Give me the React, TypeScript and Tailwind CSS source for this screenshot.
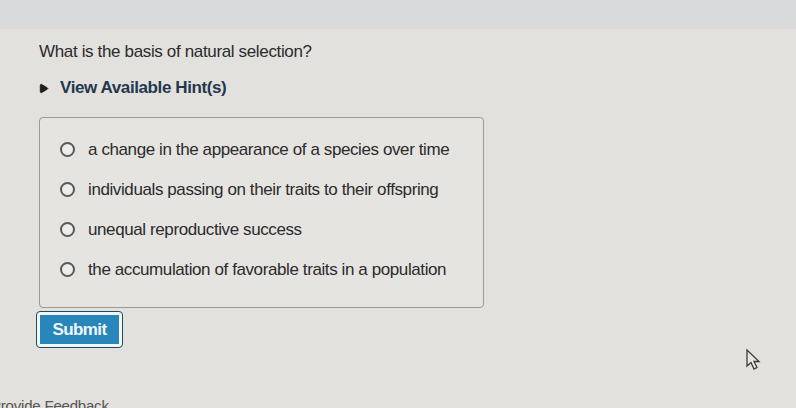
import { Play } from "lucide-react";

const options = [
  "a change in the appearance of a species over time",
  "individuals passing on their traits to their offspring",
  "unequal reproductive success",
  "the accumulation of favorable traits in a population",
];

export default function App() {
  return (
    <div
      className="w-[796px] h-[408px] overflow-hidden bg-[#e3e1dd] text-[#2b2b2b] flex flex-col"
      style={{ fontFamily: '"Liberation Sans", Arial, sans-serif' }}
    >
      <div className="h-[29px] bg-[#d9dadb] shrink-0" />
      <div className="relative flex-1 pl-[39px]">
        <p className="mt-[13px] text-[17px] tracking-[-0.35px] leading-[20px]">
          What is the basis of natural selection?
        </p>
        <div className="mt-[16px] -ml-[1px] flex items-center gap-[11px]">
          <Play size={11} className="fill-[#1e1e1e] text-[#1e1e1e]" />
          <span className="text-[17px] font-bold tracking-[-0.4px] text-[#22384e] leading-[20px]">
            View Available Hint(s)
          </span>
        </div>
        <div className="mt-[19px] w-[445px] h-[191px] rounded-[4px] border border-[#9c9a97] bg-[#e6e4e1] pt-[21px] pl-[20px] flex flex-col gap-[19px]">
          {options.map((o) => (
            <label key={o} className="flex items-center gap-[13px]">
              <span className="w-[15px] h-[15px] rounded-full border-[2px] border-[#5a5a5a] bg-[#ededeb] shrink-0" />
              <span className="text-[17px] tracking-[-0.4px] leading-[21px]">{o}</span>
            </label>
          ))}
        </div>
        <button className="mt-[4px] -ml-[2px] w-[85px] h-[35px] rounded-[3px] border-[3px] border-[#f4f6f6] outline outline-[1.5px] outline-[#1d4d66] bg-[#2886ba] text-[#eef6fa] text-[17px] font-bold tracking-[-0.6px]">
          Submit
        </button>
        <svg
          className="absolute left-[745px] top-[319px]"
          width="20"
          height="24"
          viewBox="0 0 20 24"
          fill="#e9e7e4"
          stroke="#3a3a3a"
          strokeWidth="1.3"
        >
          <path d="M2 2 L2 18 L6 14.5 L9 21 L12 19.5 L9 13.5 L14 13.5 Z" />
        </svg>
        <p className="absolute -left-[9px] top-[368px] text-[15px] leading-[18px] text-[#555] tracking-[-0.2px]">
          Provide Feedback
        </p>
      </div>
    </div>
  );
}
